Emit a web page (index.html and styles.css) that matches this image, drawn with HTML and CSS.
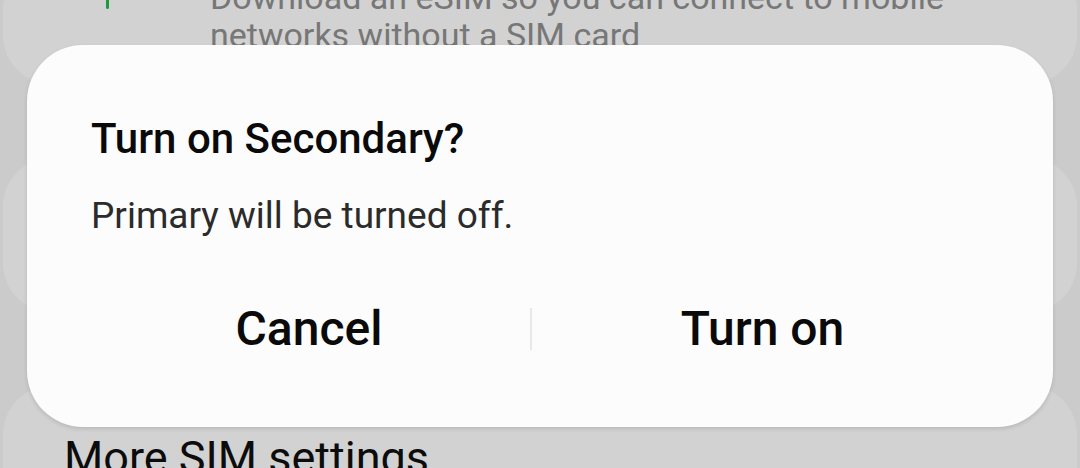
FILE: index.html
```html
<!DOCTYPE html>
<html lang="en">
<head>
<meta charset="utf-8">
<title>Turn on Secondary?</title>
<link rel="stylesheet" href="styles.css">
</head>
<body>
<div class="screen">
  <div class="page">
    <div class="card card-top">
      <div class="icon-col"><span class="green-bar"></span></div>
      <p class="desc">Download an eSIM so you can connect to mobile networks without a SIM card</p>
    </div>
    <div class="card card-mid"></div>
    <div class="card card-bottom">
      <p class="item-title">More SIM settings</p>
    </div>
  </div>

  <div class="dialog">
    <h1 class="dialog-title">Turn on Secondary?</h1>
    <p class="dialog-body">Primary will be turned off.</p>
    <div class="dialog-actions">
      <button class="btn">Cancel</button>
      <span class="divider"></span>
      <button class="btn">Turn on</button>
    </div>
  </div>
</div>
</body>
</html>
```

FILE: styles.css
```css
html, body {
  margin: 0;
  padding: 0;
}
body {
  width: 1080px;
  height: 468px;
  overflow: hidden;
  background: #cbcbcb;
  font-family: Roboto, "Noto Sans", sans-serif;
}
.screen {
  position: relative;
  width: 1080px;
  height: 468px;
  overflow: hidden;
}
.page {
  display: flex;
  flex-direction: column;
  gap: 72px;
  margin-top: -40px;
  padding: 0 3px;
}
.card {
  background: #d2d2d2;
  border-radius: 50px;
}
.card-top {
  height: 125px;
  display: flex;
}
.icon-col {
  width: 207px;
  position: relative;
}
.green-bar {
  position: absolute;
  left: 103px;
  top: 30px;
  width: 3px;
  height: 19px;
  border-radius: 2px;
  background: #1f9a3f;
}
.desc {
  margin: 0;
  padding-top: 18px;
  width: 780px;
  font-size: 34px;
  line-height: 38px;
  color: #777777;
}
.card-mid {
  height: 156px;
}
.card-bottom {
  height: 200px;
  padding-top: 46px;
  box-sizing: border-box;
}
.item-title {
  margin: 0 0 0 61px;
  font-size: 45px;
  line-height: 53px;
  color: #0c0c0c;
}
.dialog {
  position: absolute;
  left: 27px;
  top: 45px;
  width: 1026px;
  height: 382px;
  box-sizing: border-box;
  background: #fcfcfc;
  border-radius: 56px;
  box-shadow: 0 2px 4px rgba(0, 0, 0, 0.12);
  padding: 69px 0 0 64px;
  display: flex;
  flex-direction: column;
}
.dialog-title {
  margin: 0;
  font-size: 42px;
  line-height: 50px;
  font-weight: 500;
  color: #0a0a0a;
}
.dialog-body {
  margin: 30px 0 0 0;
  font-size: 37px;
  line-height: 44px;
  font-weight: 400;
  color: #2b2b2b;
}
.dialog-actions {
  margin: 63px 0 0 -3px;
  display: grid;
  grid-template-columns: 442px 2px 461px;
  align-items: center;
}
.btn {
  border: none;
  background: none;
  padding: 0;
  font-family: inherit;
  font-size: 48px;
  line-height: 56px;
  font-weight: 500;
  color: #0a0a0a;
  text-align: center;
}
.divider {
  width: 2px;
  height: 42px;
  background: #e8e8e8;
}
```
